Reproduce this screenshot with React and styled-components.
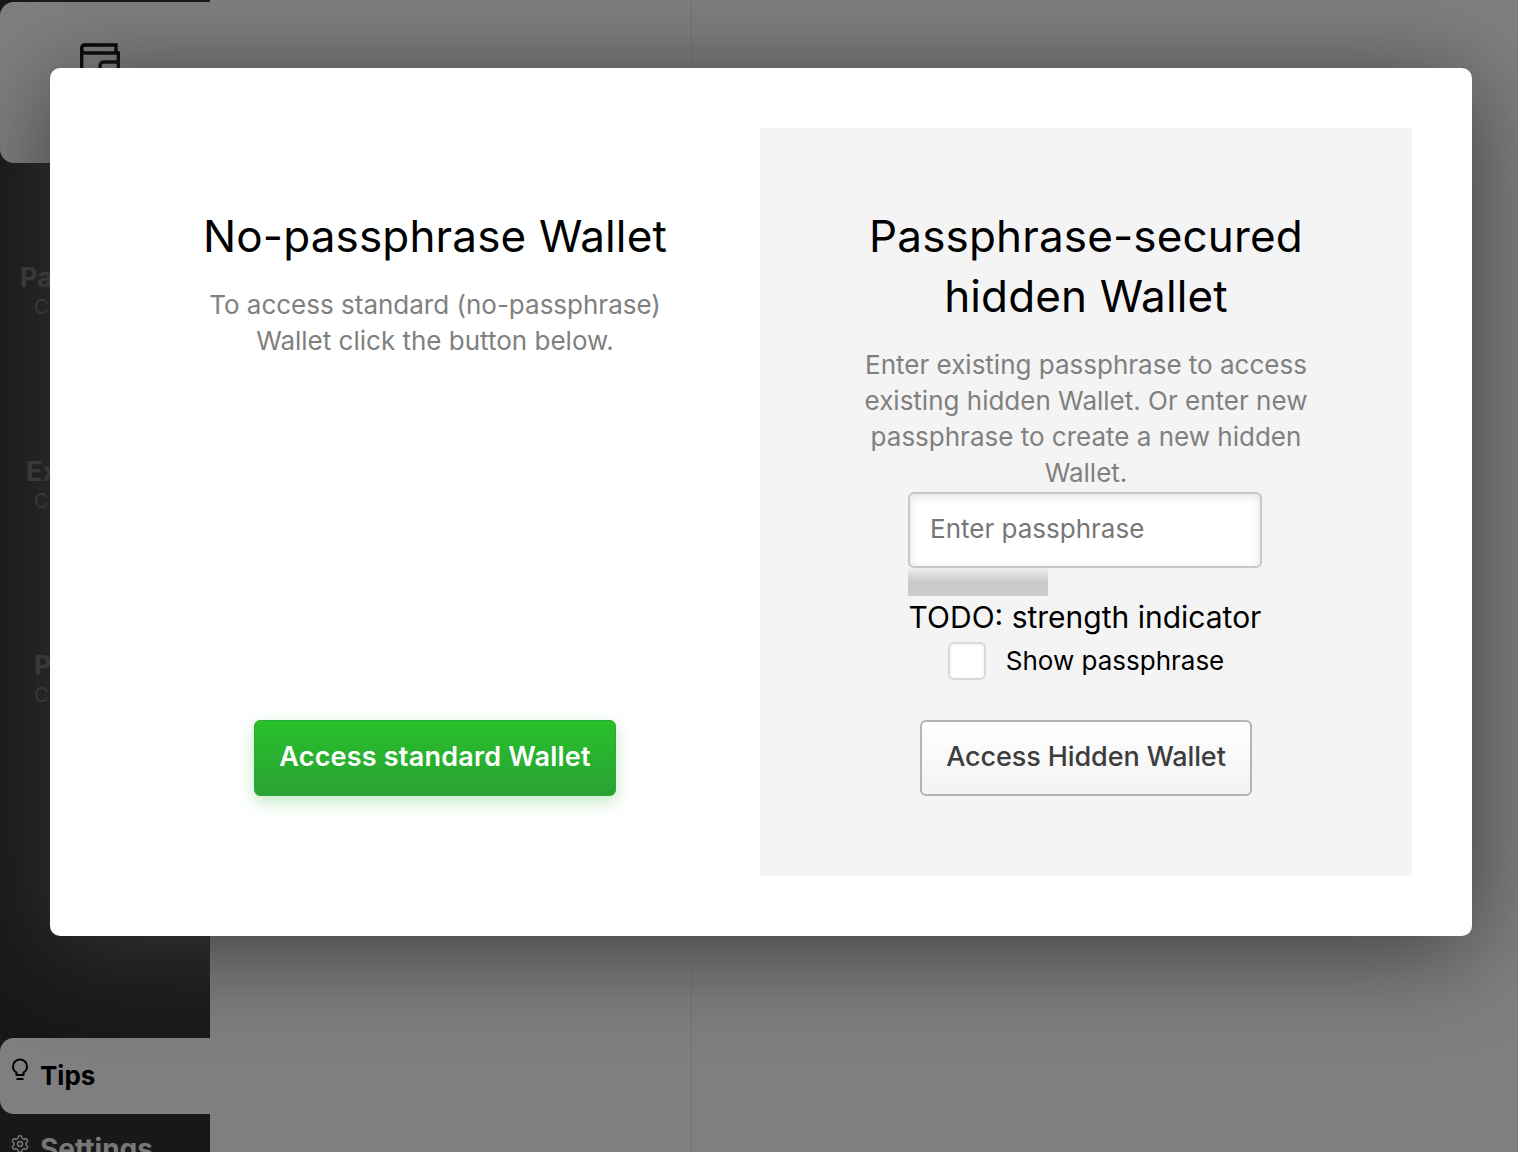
import React from "react";
import styled, { createGlobalStyle } from "styled-components";
import { Settings } from "lucide-react";

const Global = createGlobalStyle`
  html, body {
    margin: 0;
    height: 100%;
    overflow: hidden;
    background: #fff;
    font-family: "Inter", "Liberation Sans", sans-serif;
  }
  * { box-sizing: border-box; }
`;

const Page = styled.div`
  display: flex;
  height: 1152px;
  overflow: hidden;
`;

const Sidebar = styled.aside`
  width: 210px;
  flex-shrink: 0;
  padding-top: 2px;
  background: #303030;
  display: flex;
  flex-direction: column;
`;

const ActiveItem = styled.div`
  height: 161px;
  padding: 40px 0 0 79px;
  background: #fff;
  border-radius: 14px 0 0 14px;
`;

const NavItem = styled.div`
  height: 194px;
  padding: 100px 0 0 ${(p) => p.$inset}px;
  color: #747474;
`;

const NavTitle = styled.div`
  font-size: 27px;
  line-height: 30px;
  font-weight: 700;
`;

const NavNote = styled.div`
  margin-left: ${(p) => p.$shift}px;
  font-size: 20px;
  line-height: 28px;
`;

const Spacer = styled.div`
  flex: 1;
`;

const TipsRow = styled.div`
  height: 76px;
  display: flex;
  align-items: center;
  gap: 10px;
  padding: 0 0 2px 10px;
  background: #fff;
  border-radius: 14px 0 0 14px;
  flex-shrink: 0;
`;

const TipsIcon = styled.svg`
  width: 20px;
  height: 26px;
  margin-top: -12px;
`;

const TipsLabel = styled.span`
  font-size: 26px;
  font-weight: 700;
  color: #000;
`;

const SettingsRow = styled.div`
  height: 38px;
  flex-shrink: 0;
  display: flex;
  align-items: flex-start;
  gap: 10px;
  padding: 20px 0 0 10px;
  color: #f0f0f0;
  font-size: 28px;
  font-weight: 700;
  line-height: 30px;
  overflow: hidden;
`;

const Main = styled.main`
  flex: 1;
  display: flex;
`;

const MainLeft = styled.div`
  width: 482px;
  border-right: 2px solid #f4f4f4;
`;

const Overlay = styled.div`
  position: fixed;
  inset: 0;
  padding: 68px 0 0 50px;
  background: rgba(0, 0, 0, 0.5);
`;

const Modal = styled.div`
  width: 1422px;
  height: 868px;
  padding: 60px;
  display: grid;
  grid-template-columns: 650px 652px;
  background: #fff;
  border-radius: 10px;
  box-shadow: 0 14px 100px rgba(55, 55, 55, 0.9);
`;

const Column = styled.section`
  display: flex;
  flex-direction: column;
  align-items: center;
  padding: 78px 80px 80px;
  text-align: center;
  background: ${(p) => (p.$shaded ? "#f4f4f4" : "#fff")};
`;

const Title = styled.h2`
  margin: 0 0 21px;
  font-size: 44px;
  line-height: 60px;
  font-weight: 400;
  color: #000;
  letter-spacing: 0.15px;
  white-space: nowrap;
`;

const Text = styled.p`
  margin: 0;
  font-size: 26px;
  line-height: 36px;
  color: #808080;
`;

const Field = styled.input`
  width: 354px;
  height: 76px;
  padding: 0 20px 4px;
  flex-shrink: 0;
  background: #fff;
  border: 2px solid #c8c8c8;
  border-radius: 6px;
  box-shadow: inset 0 2px 8px rgba(0, 0, 0, 0.12);
  font: 400 26px "Inter", sans-serif;
  color: #333;
  outline: none;
  &::placeholder { color: #777; opacity: 1; }
`;

const FieldGroup = styled.div`
  width: 354px;
  margin: 1px 2px 0 0;
  display: flex;
  flex-direction: column;
`;

const Strength = styled.div`
  width: 140px;
  height: 28px;
  background: linear-gradient(#f0f0f0, #c9c9c9 50%, #cdcdcd);
`;

const Todo = styled.div`
  font-size: 30px;
  line-height: 42px;
  color: #000;
  white-space: nowrap;
`;

const CheckRow = styled.label`
  margin-top: 4px;
  display: flex;
  align-items: center;
  gap: 20px;
  font-size: 26px;
  color: #000;
`;

const CheckLabel = styled.span`
  margin-top: -2px;
`;

const CheckBox = styled.input`
  appearance: none;
  margin: 0;
  width: 38px;
  height: 38px;
  background: #fff;
  border: 2px solid #d8d8d8;
  border-radius: 6px;
  box-shadow: inset 0 1px 4px rgba(0, 0, 0, 0.06);
`;

const Button = styled.button`
  margin-top: auto;
  height: 76px;
  padding-bottom: 5px;
  flex-shrink: 0;
  font: ${(p) => (p.$primary ? 600 : 500)} 27px "Inter", sans-serif;
  border-radius: 6px;
  ${(p) =>
    p.$primary
      ? `
    width: 362px;
    color: #fff;
    letter-spacing: 0.2px;
    border: 1px solid #2aa838;
    background: linear-gradient(#28c02a, #2aa235);
    box-shadow: 0 6px 16px rgba(40, 180, 50, 0.28);
  `
      : `
    width: 332px;
    color: #3d3d3d;
    letter-spacing: -0.1px;
    border: 2px solid #b4b4b4;
    background: linear-gradient(#ffffff, #f3f3f3);
  `}
`;

const WalletIcon = () => (
  <svg width="42" height="50" viewBox="0 0 42 50" fill="none" stroke="#000" strokeWidth="3.4">
    <path d="M37 10V3H5.500C3 3 2.700 5 2.700 7s.3 4 2.800 4H39.300v37H2.700V7" />
    <path d="M39.300 20H25c-2.500 0-4 2-4 5s1.500 5 4 5h14.300" />
  </svg>
);

const App = () => (
  <>
    <Global />
    <Page>
      <Sidebar>
        <ActiveItem>
          <WalletIcon />
        </ActiveItem>
        <NavItem $inset={20}>
          <NavTitle>Passwords</NavTitle>
          <NavNote $shift={14}>Coming soon</NavNote>
        </NavItem>
        <NavItem $inset={26}>
          <NavTitle>Exchange</NavTitle>
          <NavNote $shift={8}>Coming soon</NavNote>
        </NavItem>
        <NavItem $inset={34}>
          <NavTitle>Portfolio</NavTitle>
          <NavNote $shift={0}>Coming soon</NavNote>
        </NavItem>
        <Spacer />
        <TipsRow>
          <TipsIcon viewBox="0 0 20 26" fill="none" stroke="#000" strokeWidth="2">
            <path d="M6.500 16.500C4 15 3 13 3 10.500a7 7 0 0 1 14 0c0 2.500-1 4.500-3.500 6V19h-7z" />
            <path d="M6.500 23h7" />
          </TipsIcon>
          <TipsLabel>Tips</TipsLabel>
        </TipsRow>
        <SettingsRow>
          <Settings size={20} strokeWidth={1.8} />
          Settings
        </SettingsRow>
      </Sidebar>
      <Main>
        <MainLeft />
      </Main>
    </Page>
    <Overlay>
      <Modal>
        <Column>
          <Title>No-passphrase Wallet</Title>
          <Text>
            To access standard (no-passphrase)
            <br />
            Wallet click the button below.
          </Text>
          <Button $primary>Access standard Wallet</Button>
        </Column>
        <Column $shaded>
          <Title>
            Passphrase-secured
            <br />
            hidden Wallet
          </Title>
          <Text>
            Enter existing passphrase to access existing hidden Wallet. Or enter new passphrase to
            create a new hidden Wallet.
          </Text>
          <FieldGroup>
            <Field placeholder="Enter passphrase" />
            <Strength />
            <Todo>TODO: strength indicator</Todo>
          </FieldGroup>
          <CheckRow>
            <CheckBox type="checkbox" />
            <CheckLabel>Show passphrase</CheckLabel>
          </CheckRow>
          <Button>Access Hidden Wallet</Button>
        </Column>
      </Modal>
    </Overlay>
  </>
);

export default App;
